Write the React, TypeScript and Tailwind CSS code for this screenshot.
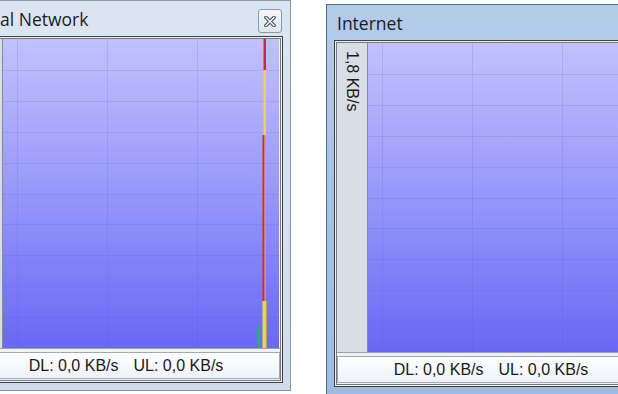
import { useId } from 'react';

const PLOT_W = 276;
const PLOT_H = 309;

// vertical grid lines sit 90px apart, horizontal ones split the plot in 10 rows
const vLines = [14, 104, 194];
const hLines = Array.from({ length: 9 }, (_, i) => Math.round(((i + 1) * PLOT_H) / 10));

const Chart = ({ traffic }: { traffic?: boolean }) => {
  const id = useId();
  return (
    <svg width={PLOT_W} height={PLOT_H} className="block shrink-0">
      <defs>
        <linearGradient id={id} x1="0" y1="0" x2="0" y2="1">
          <stop offset="0" stopColor="#c1c1fe" />
          <stop offset="0.5" stopColor="#9797fa" />
          <stop offset="1" stopColor="#6868f5" />
        </linearGradient>
      </defs>
      <rect width={PLOT_W} height={PLOT_H} fill={`url(#${id})`} />
      {hLines.map((y) => (
        <rect key={`h${y}`} x="0" y={y} width={PLOT_W} height="1" fill="#5a5ac8" opacity="0.16" />
      ))}
      {vLines.map((x) => (
        <rect key={`v${x}`} x={x} y="0" width="1" height={PLOT_H} fill="#5a5ac8" opacity="0.16" />
      ))}
      {traffic && (
        <g>
          <rect x="260.5" y="0" width="2.5" height="31" fill="#d3283a" />
          <rect x="260.5" y="31" width="2.5" height="65" fill="#e6d84a" />
          <rect x="259.5" y="96" width="2" height="166" fill="#d3283a" />
          <rect x="261.5" y="96" width="1.2" height="166" fill="#e8a23a" />
          <rect x="259.5" y="262" width="3.5" height="47" fill="#e8da46" />
          <rect x="262.8" y="262" width="1" height="47" fill="#e0a040" />
          <rect x="255" y="286" width="2" height="23" fill="#2fb455" />
        </g>
      )}
    </svg>
  );
};

const CloseButton = () => (
  <div className="mt-[8px] self-start w-[24px] h-[24px] rounded-[3px] border border-[#8c98a9] bg-gradient-to-b from-[#f5f8fc] to-[#dce5f0] flex items-center justify-center">
    <svg width="12" height="11" viewBox="0 0 12 11">
      <path d="M2 1.5 L10 9.5 M10 1.5 L2 9.5" stroke="#4e5560" strokeWidth="3.6" strokeLinecap="square" />
      <path d="M2 1.5 L10 9.5 M10 1.5 L2 9.5" stroke="#f4f6f9" strokeWidth="1.4" strokeLinecap="square" />
    </svg>
  </div>
);

type WindowProps = {
  title: string;
  active?: boolean;
  closable?: boolean;
  traffic?: boolean;
  className?: string;
};

const MonitorWindow = ({ title, active, closable, traffic, className = '' }: WindowProps) => (
  <div
    className={`w-[330px] h-[391px] shrink-0 border flex flex-col ${
      active
        ? 'border-[#4f6b94] bg-gradient-to-b from-[#b4cbe8] via-[#a7c2e4] to-[#9fbbe0]'
        : 'border-[#8a98a9] bg-gradient-to-b from-[#dce6f2] to-[#cfdcec]'
    } ${className}`}
  >
    <div className="h-[35px] flex items-center justify-between pl-[10px] pr-[8px]">
      <span className="font-['Open_Sans',sans-serif] text-[17.5px] leading-none text-[#1c1c1c] whitespace-nowrap pt-[3px]">
        {title}
      </span>
      {closable && <CloseButton />}
    </div>
    <div className="mx-[7px] border border-[#3f3f3f] p-px bg-[#eef1f5]">
      <div className="border border-[#777b80] bg-[#eff2f6] flex flex-col">
        <div className="flex">
          <div className="w-[31px] shrink-0 border-r border-[#868c94] bg-[#d8dee6] flex justify-center pt-[8px]">
            <span className="[writing-mode:vertical-rl] font-['Liberation_Sans',Arial,sans-serif] text-[16px] leading-none text-[#1a1a1a] whitespace-nowrap">
              1,8 KB/s
            </span>
          </div>
          <Chart traffic={traffic} />
        </div>
        <div className="border-t border-[#9ea3aa] pt-[3px] pb-px">
          <div className="h-[27px] border border-[#a3a9b2] bg-gradient-to-b from-[#ffffff] to-[#eef2f8] flex items-center justify-center gap-[15px] font-['Liberation_Sans',Arial,sans-serif] text-[16px] leading-none text-[#1a1a1a] whitespace-nowrap">
            <span>DL: 0,0 KB/s</span>
            <span>UL: 0,0 KB/s</span>
          </div>
        </div>
      </div>
    </div>
  </div>
);

export default function App() {
  return (
    <div className="w-[618px] h-[394px] overflow-hidden bg-white flex items-start">
      <MonitorWindow title="Local Network" closable traffic className="ml-[-39px]" />
      <MonitorWindow title="Internet" active className="ml-[35px] mt-[4px]" />
    </div>
  );
}
